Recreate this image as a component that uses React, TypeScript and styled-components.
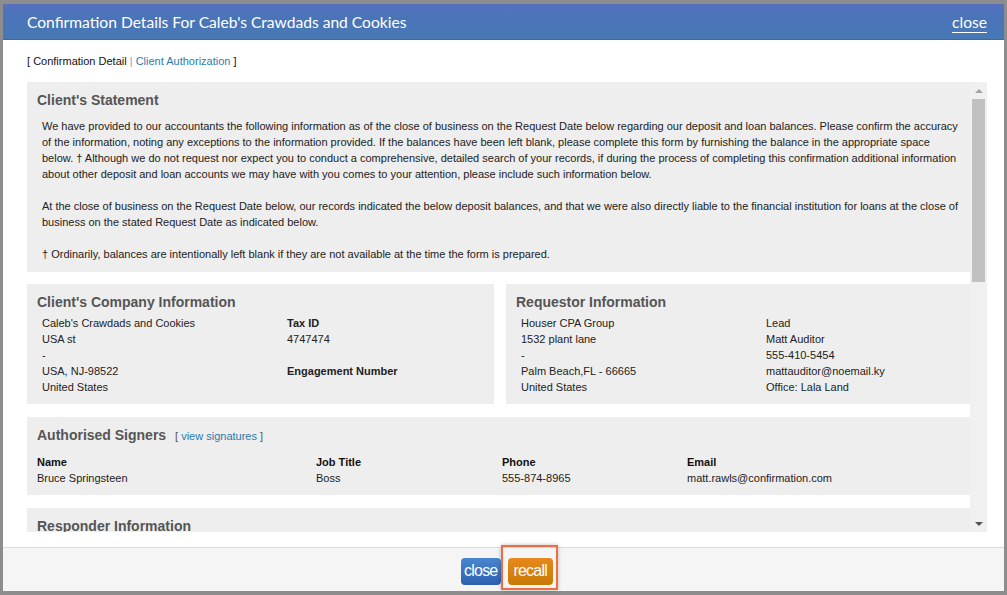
import React from 'react';
import styled, { createGlobalStyle } from 'styled-components';

const Global = createGlobalStyle`
  html, body {
    margin: 0;
    padding: 0;
    background: #8d8d8d;
    font-family: "Liberation Sans", Arial, sans-serif;
  }
  * { box-sizing: border-box; }
`;

const statement = [
  'We have provided to our accountants the following information as of the close of business on the Request Date below regarding our deposit and loan balances. Please confirm the accuracy of the information, noting any exceptions to the information provided. If the balances have been left blank, please complete this form by furnishing the balance in the appropriate space below. † Although we do not request nor expect you to conduct a comprehensive, detailed search of your records, if during the process of completing this confirmation additional information about other deposit and loan accounts we may have with you comes to your attention, please include such information below.',
  'At the close of business on the Request Date below, our records indicated the below deposit balances, and that we were also directly liable to the financial institution for loans at the close of business on the stated Request Date as indicated below.',
  '† Ordinarily, balances are intentionally left blank if they are not available at the time the form is prepared.',
];

const signers = [
  { name: 'Bruce Springsteen', title: 'Boss', phone: '555-874-8965', email: 'matt.rawls@confirmation.com' },
];

export default function App() {
  return (
    <>
      <Global />
      <Page>
        <Modal>
          <Header>
            <Title>Confirmation Details For Caleb's Crawdads and Cookies</Title>
            <HeaderClose href="#">close</HeaderClose>
          </Header>
          <Body>
            <Tabs>
              [ <span>Confirmation Detail</span> <Sep>|</Sep> <TabLink href="#">Client Authorization</TabLink> ]
            </Tabs>
            <ScrollArea>
              <ScrollContent>
                <Card>
                  <CardTitle>Client's Statement</CardTitle>
                  {statement.map((p, i) => (
                    <Para key={i}>{p}</Para>
                  ))}
                </Card>
                <TwoCards>
                  <Card $pb={9}>
                    <CardTitle>Client's Company Information</CardTitle>
                    <InfoGrid>
                      <div>
                        <Line>Caleb's Crawdads and Cookies</Line>
                        <Line>USA st</Line>
                        <Line>-</Line>
                        <Line>USA, NJ-98522</Line>
                        <Line>United States</Line>
                      </div>
                      <div>
                        <Line $bold>Tax ID</Line>
                        <Line>4747474</Line>
                        <Line>&nbsp;</Line>
                        <Line $bold>Engagement Number</Line>
                        <Line>&nbsp;</Line>
                      </div>
                    </InfoGrid>
                  </Card>
                  <Card $pb={9}>
                    <CardTitle>Requestor Information</CardTitle>
                    <InfoGrid>
                      <div>
                        <Line>Houser CPA Group</Line>
                        <Line>1532 plant lane</Line>
                        <Line>-</Line>
                        <Line>Palm Beach,FL - 66665</Line>
                        <Line>United States</Line>
                      </div>
                      <div>
                        <Line>Lead</Line>
                        <Line>Matt Auditor</Line>
                        <Line>555-410-5454</Line>
                        <Line>mattauditor@noemail.ky</Line>
                        <Line>Office: Lala Land</Line>
                      </div>
                    </InfoGrid>
                  </Card>
                </TwoCards>
                <Card $pb={9} $mb={1}>
                  <CardTitle>
                    Authorised Signers <SmallLink>[ <a href="#">view signatures</a> ]</SmallLink>
                  </CardTitle>
                  <SignerTable>
                    <Th>Name</Th>
                    <Th>Job Title</Th>
                    <Th>Phone</Th>
                    <Th>Email</Th>
                    {signers.map((s) => (
                      <React.Fragment key={s.email}>
                        <Td>{s.name}</Td>
                        <Td>{s.title}</Td>
                        <Td>{s.phone}</Td>
                        <Td>{s.email}</Td>
                      </React.Fragment>
                    ))}
                  </SignerTable>
                </Card>
                <Card>
                  <CardTitle>Responder Information</CardTitle>
                  <InfoGrid>
                    <div>
                      <Line>Name</Line>
                      <Line>Title</Line>
                    </div>
                  </InfoGrid>
                </Card>
              </ScrollContent>
              <Scrollbar>
                <Arrow $up />
                <Thumb />
                <Track />
                <Arrow />
              </Scrollbar>
            </ScrollArea>
          </Body>
          <Footer>
            <Button $variant="blue">close</Button>
            <Highlight>
              <Button $variant="orange">recall</Button>
            </Highlight>
          </Footer>
        </Modal>
      </Page>
    </>
  );
}

const Page = styled.div`
  width: 1007px;
  height: 595px;
  padding: 4px 3px 4px 3px;
`;

const Modal = styled.div`
  display: flex;
  flex-direction: column;
  height: 100%;
  background: #fff;
`;

const Header = styled.div`
  height: 36px;
  flex: none;
  display: flex;
  align-items: center;
  justify-content: space-between;
  padding: 0 17px 0 24px;
  background: linear-gradient(#5571c0, #4a74b8 40%, #4878b6);
  border-bottom: 1px solid #41689f;
`;

const Title = styled.div`
  font-family: Lato, "Open Sans", sans-serif;
  font-size: 15.6px;
  color: #fff;
  margin-top: 1px;
`;

const HeaderClose = styled.a`
  font-family: Lato, "Open Sans", sans-serif;
  font-size: 15.6px;
  color: #fff;
  text-decoration: underline;
  text-underline-offset: 4px;
`;

const Body = styled.div`
  flex: 1;
  display: flex;
  flex-direction: column;
  padding: 14px 17px 15px 24px;
  min-height: 0;
`;

const Tabs = styled.div`
  font-size: 11px;
  line-height: 14px;
  color: #111;
  margin-bottom: 14px;
`;

const Sep = styled.span`
  color: #999;
`;

const TabLink = styled.a`
  color: #2a7ab0;
  text-decoration: none;
`;

const ScrollArea = styled.div`
  display: flex;
  height: 450px;
  flex: none;
`;

const ScrollContent = styled.div`
  flex: 1;
  overflow: hidden;
  display: flex;
  flex-direction: column;
  gap: 12px;
`;

const Card = styled.div<{ $pb?: number; $mb?: number }>`
  background: #eeeeee;
  padding: 10px 10px ${(p) => p.$pb ?? 10}px 10px;
  margin-bottom: ${(p) => p.$mb ?? 0}px;
  flex: none;
`;

const CardTitle = styled.div`
  font-size: 14px;
  line-height: 16px;
  font-weight: bold;
  color: #555;
  margin-bottom: 5px;
`;

const SmallLink = styled.span`
  font-size: 11px;
  font-weight: normal;
  color: #555;
  margin-left: 5px;
  a {
    color: #2a7ab0;
    text-decoration: none;
  }
`;

const Para = styled.p`
  margin: 0 0 16px 5px;
  font-size: 11px;
  line-height: 16px;
  color: #222;
  &:first-of-type {
    margin-top: 10px;
  }
  &:last-child {
    margin-bottom: 0;
  }
`;

const TwoCards = styled.div`
  display: grid;
  grid-template-columns: 467px 1fr;
  gap: 12px;
  flex: none;
  margin-bottom: 1px;
`;

const InfoGrid = styled.div`
  display: grid;
  grid-template-columns: 245px 1fr;
  padding-left: 5px;
`;

const Line = styled.div<{ $bold?: boolean }>`
  font-size: 11px;
  line-height: 16px;
  color: #222;
  font-weight: ${(p) => (p.$bold ? 'bold' : 'normal')};
`;

const SignerTable = styled.div`
  display: grid;
  grid-template-columns: 279px 186px 185px 1fr;
  margin-top: 10px;
`;

const Th = styled.div`
  font-size: 11px;
  line-height: 16px;
  font-weight: bold;
  color: #111;
`;

const Td = styled.div`
  font-size: 11px;
  line-height: 16px;
  color: #222;
`;

const Scrollbar = styled.div`
  width: 17px;
  flex: none;
  background: #f0f0f0;
  display: flex;
  flex-direction: column;
  align-items: center;
`;

const Arrow = styled.div<{ $up?: boolean }>`
  width: 17px;
  height: 17px;
  flex: none;
  display: flex;
  align-items: center;
  justify-content: center;
  &::before {
    content: '';
    border-left: 4px solid transparent;
    border-right: 4px solid transparent;
    ${(p) => (p.$up ? 'border-bottom: 4px solid #a3a3a3;' : 'border-top: 4px solid #505050;')}
  }
`;

const Thumb = styled.div`
  width: 13px;
  height: 183px;
  flex: none;
  background: #c1c1c1;
`;

const Track = styled.div`
  flex: 1;
`;

const Footer = styled.div`
  height: 44px;
  flex: none;
  background: #f5f5f5;
  border-top: 1px solid #dcdcdc;
  display: flex;
  align-items: center;
  justify-content: center;
  gap: 7px;
  padding: 3px 0 0 7px;
`;

const Button = styled.button<{ $variant: 'blue' | 'orange' }>`
  font-family: "Liberation Sans", Arial, sans-serif;
  font-size: 16px;
  letter-spacing: -0.8px;
  color: #fff;
  height: 27px;
  padding: ${(p) => (p.$variant === 'blue' ? '0 4px 0 3px' : '0 6px 0 5px')};
  border: none;
  border-radius: 4px;
  background: ${(p) =>
    p.$variant === 'blue'
      ? 'linear-gradient(#4a86d0, #2c62b0)'
      : 'linear-gradient(#e8881c, #c87a06)'};
  cursor: pointer;
`;

const Highlight = styled.div`
  position: relative;
  display: flex;
  &::after {
    content: '';
    position: absolute;
    left: -7px;
    right: -5px;
    top: -13px;
    bottom: -5px;
    border: 2px solid #f26b43;
    box-shadow: 0 0 4px rgba(0, 0, 0, 0.25);
    pointer-events: none;
  }
`;
